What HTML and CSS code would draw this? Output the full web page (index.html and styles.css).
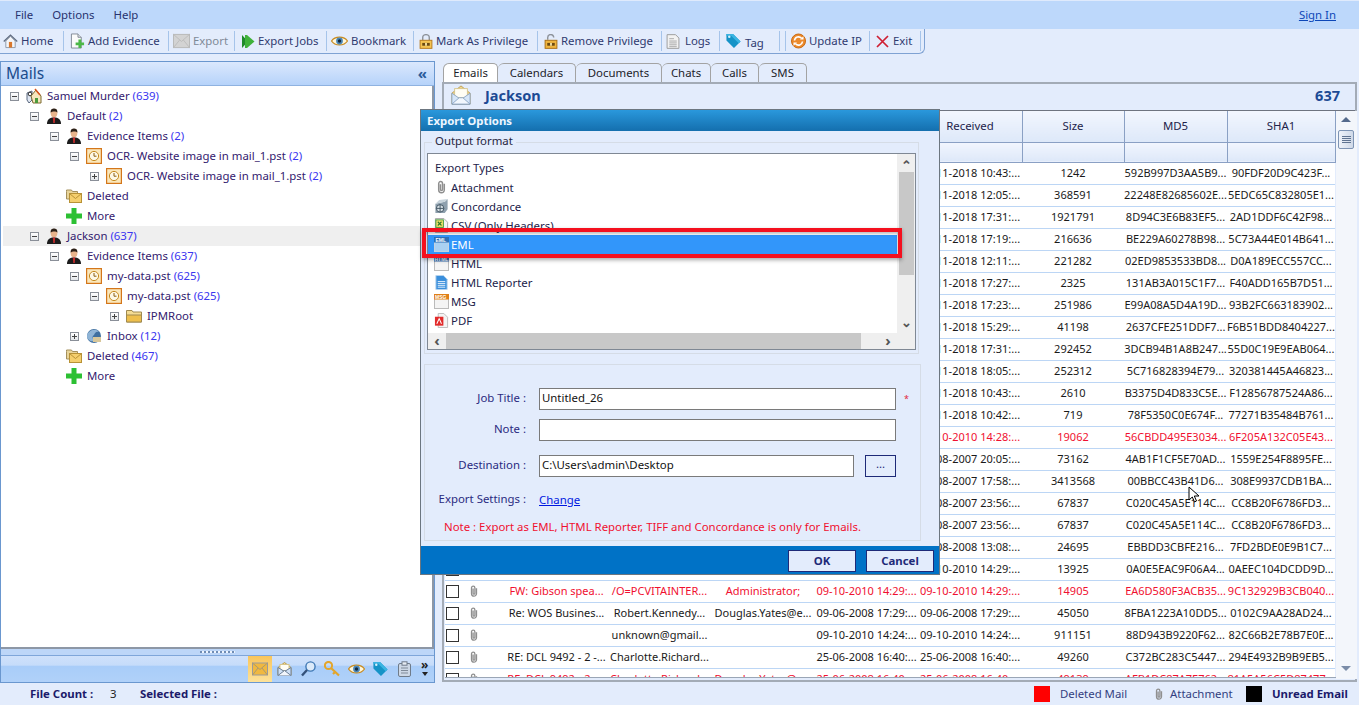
FILE: index.html
```html
<!DOCTYPE html>
<html lang="en">
<head>
<meta charset="utf-8">
<title>Export Options</title>
<link rel="stylesheet" href="styles.css">
</head>
<body>
<svg class="defs" aria-hidden="true">
  <symbol id="i-home" viewBox="0 0 16 16"><path d="M3 8v7h10V8L8 3z" fill="#f3f5f9" stroke="#8d97a8"/><path d="M.8 8.5 8 1.6l7.2 6.9" fill="none" stroke="#5e6a7e" stroke-width="1.3"/><rect x="6.3" y="9" width="3.4" height="6" fill="#d8772c"/></symbol>
  <symbol id="i-add" viewBox="0 0 16 16"><path d="M1.5.5h7l3.5 3.5v11.5H1.500z" fill="#fbfbfb" stroke="#7f8794"/><path d="M8.500.5V4H12" fill="#e4e6ea" stroke="#7f8794"/><path d="M9 6.500h3v3h3v3h-3v3H9v-3H6v-3h3z" fill="#4cb848"/></symbol>
  <symbol id="i-env-grey" viewBox="0 0 18 15"><rect x=".5" y=".5" width="17" height="14" fill="#d3d3d3" stroke="#b8b8b8"/><path d="M.5.500 9 8l8.500-7.500M.5 14.500 7 6.500M17.500 14.500 11 6.500" fill="none" stroke="#bcbcbc"/></symbol>
  <symbol id="i-jobs" viewBox="0 0 14 15"><path d="M1 1l6 6.500L1 14z" fill="#1f8a2a"/><path d="M4 1h2l7.500 6.500L6 14H4z" fill="#3fb23a"/></symbol>
  <symbol id="i-eye" viewBox="0 0 17 12"><path d="M.5 6C4 .8 13 .8 16.500 6 13 11.200 4 11.200.5 6z" fill="#fdf6dc" stroke="#c88a1e" stroke-width="1.200"/><circle cx="8.500" cy="6" r="3.400" fill="#4a86b8"/><circle cx="8.500" cy="6" r="1.700" fill="#14283c"/></symbol>
  <symbol id="i-lock" viewBox="0 0 14 16"><path d="M3.500 7V4a3.500 3.300 0 0 1 7 0v3" fill="none" stroke="#8e939b" stroke-width="1.500"/><rect x=".7" y="6.700" width="12.600" height="8.600" fill="#f5c452" stroke="#b7791c"/><rect x="3" y="9.500" width="8" height="3" fill="#6c4a12"/><rect x="6" y="9.500" width="2" height="3" fill="#f5e1a0"/></symbol>
  <symbol id="i-unlock" viewBox="0 0 14 16"><path d="M3.500 6V3.600a3.200 3 0 0 1 6.400 0" fill="none" stroke="#8e939b" stroke-width="1.500"/><rect x=".7" y="6.700" width="12.600" height="8.600" fill="#f0b63f" stroke="#a86e14"/><rect x="3" y="9.500" width="8" height="3" fill="#6c4a12"/><rect x="6" y="9.500" width="2" height="3" fill="#f5e1a0"/></symbol>
  <symbol id="i-logs" viewBox="0 0 14 16"><path d="M.7.700h9l3.600 3.600v11H.7z" fill="#f2f2f2" stroke="#9a9a9a"/><path d="M3 5h5M3 7.500h8M3 9.500h8M3 11.500h8M3 13.500h8" stroke="#a8a8a8"/></symbol>
  <symbol id="i-tag" viewBox="0 0 17 17"><path d="M1 1h7l8 8-7 7-8-8z" fill="#1593c7"/><path d="M1 1h7l8 8-2 2-8-8H1z" fill="#3ab4e2"/><circle cx="4" cy="4" r="1.300" fill="#d7f1fb"/></symbol>
  <symbol id="i-update" viewBox="0 0 15 15"><circle cx="7.500" cy="7.500" r="7" fill="#ec8a2c" stroke="#c96a12"/><path d="M3.500 7a4 4 0 0 1 7-2.200M11.500 8a4 4 0 0 1-7 2.200" fill="none" stroke="#fff" stroke-width="1.600"/><path d="M9 6h3.500V2.700zM6 9H2.500v3.300z" fill="#fff"/></symbol>
  <symbol id="i-exit" viewBox="0 0 13 13"><path d="M1 1l11 11M12 1 1 12" stroke="#cf1f33" stroke-width="1.700"/></symbol>
  <symbol id="i-person" viewBox="0 0 16 16"><path d="M1 16c0-5 3-6.500 7-6.500s7 1.500 7 6.500z" fill="#1c1c1c"/><ellipse cx="8" cy="5" rx="3.400" ry="4.200" fill="#e8b48c"/><path d="M4.600 4.500C4.500 1.500 6 .6 8 .6s3.500 1 3.400 3.900C10.500 3 6 3 4.600 4.500z" fill="#2a2018"/><path d="M6.800 9.500h2.400L8.700 15H7.300z" fill="#c72c2c"/></symbol>
  <symbol id="i-pst" viewBox="0 0 16 16"><rect x=".6" y=".6" width="14.800" height="14.800" fill="#fbe8bb" stroke="#d4761a" stroke-width="1.200"/><circle cx="8" cy="8" r="4.600" fill="#fdf8e6" stroke="#c58a20"/><path d="M8 5v3.200h2.500" fill="none" stroke="#8a5d10"/></symbol>
  <symbol id="i-del" viewBox="0 0 16 14"><path d="M.5 2.500V1h5l1 1.500h5V10H.5z" fill="#e8d49a" stroke="#a4905c"/><rect x="3.500" y="4.500" width="12" height="9" fill="#f5cf6c" stroke="#b89236"/><path d="M3.500 4.500 9.500 9.500l6-5" fill="none" stroke="#b89236"/></symbol>
  <symbol id="i-more" viewBox="0 0 16 16"><path d="M5.500 0h5v5.500H16v5h-5.500V16h-5v-5.500H0v-5h5.500z" fill="#2cc033"/></symbol>
  <symbol id="i-folder" viewBox="0 0 16 13"><path d="M.5 2.500V1h5.500l1 1.500h8.500V12.500H.5z" fill="#f4dc94" stroke="#a08a50"/><path d="M.5 5.500h15v7H.5z" fill="#eebf4c" stroke="#a08a50"/></symbol>
  <symbol id="i-root" viewBox="0 0 16 16"><path d="M1 5l5-2v9L3 15 1 12z" fill="#dfe6f2" stroke="#5d6b80"/><circle cx="4" cy="6" r="1.800" fill="#fff" stroke="#333"/><path d="M5 8l5-6 5 6v7H7z" fill="#f6e7bd" stroke="#7c6a30"/><path d="M9 1l5 6" stroke="#d8541c" stroke-width="1.500"/><rect x="9" y="10" width="3" height="5" fill="#4b9a3c"/></symbol>
  <symbol id="i-inbox" viewBox="0 0 16 16"><circle cx="8" cy="8" r="7" fill="#3f6f9f"/><path d="M3 4c3-3 8-3 10 0-3-1-4 1-5 3-2 1-2 4 1 6-4 1-8-1-8-5 0-2 1-3 2-4z" fill="#8fb4d6"/><path d="M7 9h8v5H7z" fill="#d8c79a"/></symbol>
  <symbol id="i-env-on" viewBox="0 0 16 13"><rect x=".5" y=".5" width="15" height="12" fill="#f0b840" stroke="#9a9a9a"/><path d="M.5.500 8 7l7.500-6.500M.5 12.500 6 5.500M15.500 12.500 10 5.500" fill="none" stroke="#a89a70"/></symbol>
  <symbol id="i-env-open" viewBox="0 0 15 15"><path d="M1 6 7.500 1 14 6v8H1z" fill="#f3d68a" stroke="#b89a50"/><rect x="3" y="3" width="9" height="6" fill="#fffdf4" stroke="#d5c48a"/><path d="M1 6l6.500 4L14 6v8H1z" fill="#cfe0f5" stroke="#6a7f99"/><path d="M1 14l6.500-5 6.500 5" fill="#f2f6fc" stroke="#6a7f99"/></symbol>
  <symbol id="i-mail" viewBox="0 0 22 22"><path d="M1 9 11 1l10 8v12H1z" fill="#f3d68a" stroke="#b89a50"/><rect x="4" y="4" width="14" height="10" fill="#fffdf4" stroke="#d5c48a"/><path d="M1 9l10 7 10-7v12H1z" fill="#d6e6f8" stroke="#8aa4c4"/><path d="M1 21l8-7h4l8 7z" fill="#f2f7fd" stroke="#8aa4c4"/></symbol>
  <symbol id="i-find" viewBox="0 0 15 16"><circle cx="9.500" cy="5.500" r="4.600" fill="#dceaf9" stroke="#3f78b4" stroke-width="1.400"/><path d="M6 9l-5 5.500" stroke="#33517a" stroke-width="2.400"/></symbol>
  <symbol id="i-key" viewBox="0 0 16 16"><circle cx="4.500" cy="4.500" r="3.600" fill="none" stroke="#e3a52a" stroke-width="2"/><path d="M7 7l8 7.500M11 11l-2 2" stroke="#e3a52a" stroke-width="2.200"/></symbol>
  <symbol id="i-clipboard" viewBox="0 0 14 16"><rect x="1" y="2.500" width="12" height="13" rx="1.500" fill="#cdd8e6" stroke="#6f7b8a"/><rect x="4.500" y=".8" width="5" height="3.400" fill="#e6ecf3" stroke="#6f7b8a"/><path d="M3.500 7h7M3.500 9.500h7M3.500 12h7" stroke="#808b99"/></symbol>
  <symbol id="i-clip" viewBox="0 0 8 12"><path d="M6.500 3.200v5.300a2.500 2.700 0 0 1-5 0V3a1.700 1.800 0 0 1 3.400 0v5.200a.9.900 0 0 1-1.800 0V3.500" fill="none" stroke="#8f8f8f" stroke-width="1.300"/></symbol>
  <symbol id="i-conc" viewBox="0 0 15 16"><path d="M1 5l10-2 3-3v11l-3 4H1z" fill="#8ea0ae"/><path d="M1 5l10-2 3-3-9 1z" fill="#c8d4dc"/><circle cx="6" cy="10" r="4" fill="#d7e0e6" stroke="#3f5260"/><path d="M6 6v8M2 10h8" stroke="#3f5260"/></symbol>
  <symbol id="i-csv" viewBox="0 0 14 16"><path d="M.5.500h9l4 4v11H.5z" fill="#f5f5f5" stroke="#aaa"/><rect x="1" y="2" width="8" height="8" fill="#f7e36a" stroke="#3f9a3a"/><path d="M3 4l4 4M7 4 3 8" stroke="#2d7a2a" stroke-width="1.200"/></symbol>
  <symbol id="i-report" viewBox="0 0 13 16"><path d="M.5.500h8l4 4v11H.5z" fill="#3a8fdc" stroke="#b8d4ee"/><path d="M2.500 7h8M2.500 9h8M2.500 11h8M2.500 13h8" stroke="#e8f3fd"/></symbol>
  <symbol id="i-pdf" viewBox="0 0 14 16"><path d="M3.500.500h6l4 4v11h-10z" fill="#f4f4f4" stroke="#bbb"/><rect x="0" y="4" width="9" height="9.500" fill="#e22b2b"/><path d="M2 11.500 4.500 6 7 11.500" fill="none" stroke="#fff" stroke-width="1.100"/></symbol>
</svg>

<header class="menubar">
  <nav class="menus"><span>File</span><span>Options</span><span>Help</span></nav>
  <a class="signin" href="#">Sign In</a>
</header>

<div class="toolbar">
  <div class="tool t-home"><svg class="ic i15"><use href="#i-home"/></svg><span>Home</span></div>
  <div class="tool t-add"><svg class="ic i15"><use href="#i-add"/></svg><span>Add Evidence</span></div>
  <div class="tool t-exp off"><svg class="ic i17"><use href="#i-env-grey"/></svg><span>Export</span></div>
  <div class="tool t-jobs"><svg class="ic i14"><use href="#i-jobs"/></svg><span>Export Jobs</span></div>
  <div class="tool t-book"><svg class="ic i17"><use href="#i-eye"/></svg><span>Bookmark</span></div>
  <div class="tool t-mark"><svg class="ic i14"><use href="#i-lock"/></svg><span>Mark As Privilege</span></div>
  <div class="tool t-rem"><svg class="ic i14"><use href="#i-unlock"/></svg><span>Remove Privilege</span></div>
  <div class="tool t-logs"><svg class="ic i14"><use href="#i-logs"/></svg><span>Logs</span></div>
  <div class="tool t-tag"><svg class="ic i17"><use href="#i-tag"/></svg><span class="tagt">Tag</span></div>
  <div class="tool t-upd"><svg class="ic i15"><use href="#i-update"/></svg><span>Update IP</span></div>
  <div class="tool t-exit"><svg class="ic i13"><use href="#i-exit"/></svg><span>Exit</span></div>
</div>

<main class="main">
  <aside class="left">
    <div class="left-head"><span class="left-title">Mails</span><span class="collapse">«</span></div>
    <div class="tree">
      <div class="node d0"><i class="box minus"></i><svg class="ic nic"><use href="#i-root"/></svg><span>Samuel Murder <b>(639)</b></span></div>
      <div class="node d1"><i class="box minus"></i><svg class="ic nic"><use href="#i-person"/></svg><span>Default <b>(2)</b></span></div>
      <div class="node d2"><i class="box minus"></i><svg class="ic nic"><use href="#i-person"/></svg><span>Evidence Items <b>(2)</b></span></div>
      <div class="node d3"><i class="box minus"></i><svg class="ic nic"><use href="#i-pst"/></svg><span>OCR- Website image in mail_1.pst <b>(2)</b></span></div>
      <div class="node d4"><i class="box plus"></i><svg class="ic nic"><use href="#i-pst"/></svg><span>OCR- Website image in mail_1.pst <b>(2)</b></span></div>
      <div class="node d2"><i class="box none"></i><svg class="ic nic"><use href="#i-del"/></svg><span>Deleted</span></div>
      <div class="node d2"><i class="box none"></i><svg class="ic nic"><use href="#i-more"/></svg><span>More</span></div>
      <div class="node d1 sel"><i class="box minus"></i><svg class="ic nic"><use href="#i-person"/></svg><span>Jackson <b>(637)</b></span></div>
      <div class="node d2"><i class="box minus"></i><svg class="ic nic"><use href="#i-person"/></svg><span>Evidence Items <b>(637)</b></span></div>
      <div class="node d3"><i class="box minus"></i><svg class="ic nic"><use href="#i-pst"/></svg><span>my-data.pst <b>(625)</b></span></div>
      <div class="node d4"><i class="box minus"></i><svg class="ic nic"><use href="#i-pst"/></svg><span>my-data.pst <b>(625)</b></span></div>
      <div class="node d5"><i class="box plus"></i><svg class="ic nic"><use href="#i-folder"/></svg><span>IPMRoot</span></div>
      <div class="node d3"><i class="box plus"></i><svg class="ic nic"><use href="#i-inbox"/></svg><span>Inbox <b>(12)</b></span></div>
      <div class="node d2"><i class="box none"></i><svg class="ic nic"><use href="#i-del"/></svg><span>Deleted <b>(467)</b></span></div>
      <div class="node d2"><i class="box none"></i><svg class="ic nic"><use href="#i-more"/></svg><span>More</span></div>
    </div>
    <div class="splitter"><span class="grip"></span></div>
    <div class="left-foot">
      <span class="fbtn on"><svg class="ic i16"><use href="#i-env-on"/></svg></span>
      <span class="fbtn"><svg class="ic i15"><use href="#i-env-open"/></svg></span>
      <span class="fbtn"><svg class="ic i15"><use href="#i-find"/></svg></span>
      <span class="fbtn"><svg class="ic i16"><use href="#i-key"/></svg></span>
      <span class="fbtn"><svg class="ic i17"><use href="#i-eye"/></svg></span>
      <span class="fbtn"><svg class="ic i17"><use href="#i-tag"/></svg></span>
      <span class="fbtn"><svg class="ic i15"><use href="#i-clipboard"/></svg></span>
      <span class="more-btn">»<i></i></span>
    </div>
  </aside>

  <section class="right">
    <div class="tabs">
      <span class="tab active t1">Emails</span><span class="tab t2">Calendars</span><span class="tab t3">Documents</span><span class="tab t4">Chats</span><span class="tab t5">Calls</span><span class="tab t6">SMS</span>
    </div>
    <div class="panel">
      <div class="panel-head">
        <svg class="ic i20"><use href="#i-mail"/></svg>
        <span class="who">Jackson</span>
        <span class="total">637</span>
      </div>
      <div class="grid-wrap">
        <div class="grid-clip">
          <table class="grid">
            <colgroup><col class="c1"><col class="c2"><col class="c3"><col class="c3"><col class="c4"><col class="c3"><col class="c4"><col class="c5"><col class="c3"><col class="c6"></colgroup>
            <thead>
              <tr class="h1"><th></th><th></th><th>Subject</th><th>From</th><th>To</th><th>Sent</th><th>Received</th><th>Size</th><th>MD5</th><th>SHA1</th></tr>
              <tr class="h2"><th></th><th></th><th></th><th></th><th></th><th></th><th></th><th></th><th></th><th></th></tr>
            </thead>
            <tbody>
              <tr><td><i class="chk"></i></td><td></td><td></td><td></td><td></td><td></td><td>09-11-2018 10:43:...</td><td>1242</td><td>592B997D3AA5B9...</td><td>90FDF20D9C423F...</td></tr>
              <tr><td><i class="chk"></i></td><td></td><td></td><td></td><td></td><td></td><td>09-11-2018 12:05:...</td><td>368591</td><td>22248E82685602E...</td><td>5EDC65C832805E1...</td></tr>
              <tr><td><i class="chk"></i></td><td></td><td></td><td></td><td></td><td></td><td>09-11-2018 17:31:...</td><td>1921791</td><td>8D94C3E6B83EF5...</td><td>2AD1DDF6C42F98...</td></tr>
              <tr><td><i class="chk"></i></td><td></td><td></td><td></td><td></td><td></td><td>09-11-2018 17:19:...</td><td>216636</td><td>BE229A60278B98...</td><td>5C73A44E014B641...</td></tr>
              <tr><td><i class="chk"></i></td><td></td><td></td><td></td><td></td><td></td><td>09-11-2018 12:11:...</td><td>221282</td><td>02ED9853533BD8...</td><td>D0A189ECC557CC...</td></tr>
              <tr><td><i class="chk"></i></td><td></td><td></td><td></td><td></td><td></td><td>09-11-2018 17:27:...</td><td>2325</td><td>131AB3A015C1F7...</td><td>F40ADD165B7D51...</td></tr>
              <tr><td><i class="chk"></i></td><td></td><td></td><td></td><td></td><td></td><td>09-11-2018 17:23:...</td><td>251986</td><td>E99A08A5D4A19D...</td><td>93B2FC663183902...</td></tr>
              <tr><td><i class="chk"></i></td><td></td><td></td><td></td><td></td><td></td><td>09-11-2018 15:29:...</td><td>41198</td><td>2637CFE251DDF7...</td><td>F6B51BDD8404227...</td></tr>
              <tr><td><i class="chk"></i></td><td></td><td></td><td></td><td></td><td></td><td>09-11-2018 17:31:...</td><td>292452</td><td>3DCB94B1A8B247...</td><td>55D0C19E9EAB064...</td></tr>
              <tr><td><i class="chk"></i></td><td></td><td></td><td></td><td></td><td></td><td>09-11-2018 18:05:...</td><td>252312</td><td>5C716828394E79...</td><td>320381445A46823...</td></tr>
              <tr><td><i class="chk"></i></td><td></td><td></td><td></td><td></td><td></td><td>09-11-2018 10:43:...</td><td>2610</td><td>B3375D4D833C5E...</td><td>F12856787524A86...</td></tr>
              <tr><td><i class="chk"></i></td><td></td><td></td><td></td><td></td><td></td><td>09-11-2018 10:42:...</td><td>719</td><td>78F5350C0E674F...</td><td>77271B35484B761...</td></tr>
              <tr class="red"><td><i class="chk"></i></td><td></td><td></td><td></td><td></td><td></td><td>09-10-2010 14:28:...</td><td>19062</td><td>56CBDD495E3034...</td><td>6F205A132C05E43...</td></tr>
              <tr><td><i class="chk"></i></td><td></td><td></td><td></td><td></td><td></td><td>21-08-2007 20:05:...</td><td>73162</td><td>4AB1F1CF5E70AD...</td><td>1559E254F8895FE...</td></tr>
              <tr><td><i class="chk"></i></td><td></td><td></td><td></td><td></td><td></td><td>21-08-2007 17:58:...</td><td>3413568</td><td>00BBCC43B41D6...</td><td>308E9937CDB1BA...</td></tr>
              <tr><td><i class="chk"></i></td><td></td><td></td><td></td><td></td><td></td><td>21-08-2007 23:56:...</td><td>67837</td><td>C020C45A5E114C...</td><td>CC8B20F6786FD3...</td></tr>
              <tr><td><i class="chk"></i></td><td></td><td></td><td></td><td></td><td></td><td>21-08-2007 23:56:...</td><td>67837</td><td>C020C45A5E114C...</td><td>CC8B20F6786FD3...</td></tr>
              <tr><td><i class="chk"></i></td><td></td><td></td><td></td><td></td><td></td><td>21-08-2008 13:08:...</td><td>24695</td><td>EBBDD3CBFE216...</td><td>7FD2BDE0E9B1C7...</td></tr>
              <tr><td><i class="chk"></i></td><td></td><td></td><td></td><td></td><td></td><td>09-10-2010 14:29:...</td><td>13925</td><td>0A0E5EAC9F06A4...</td><td>0AEEC104DCDD9D...</td></tr>
              <tr class="red"><td><i class="chk"></i></td><td><svg class="ic clip"><use href="#i-clip"/></svg></td><td>FW: Gibson spea...</td><td>/O=PCVITAINTER...</td><td>Administrator;</td><td>09-10-2010 14:29:...</td><td>09-10-2010 14:29:...</td><td>14905</td><td>EA6D580F3ACB35...</td><td>9C132929B3CB040...</td></tr>
              <tr><td><i class="chk"></i></td><td><svg class="ic clip"><use href="#i-clip"/></svg></td><td>Re: WOS Busines...</td><td>Robert.Kennedy...</td><td>Douglas.Yates@e...</td><td>09-06-2008 17:29:...</td><td>09-06-2008 17:29:...</td><td>45050</td><td>8FBA1223A10DD5...</td><td>0102C9AA28AD24...</td></tr>
              <tr><td><i class="chk"></i></td><td><svg class="ic clip"><use href="#i-clip"/></svg></td><td></td><td>unknown@gmail...</td><td></td><td>09-10-2010 14:24:...</td><td>09-10-2010 14:24:...</td><td>911151</td><td>88D943B9220F62...</td><td>82C66B2E78B7E0E...</td></tr>
              <tr><td><i class="chk"></i></td><td><svg class="ic clip"><use href="#i-clip"/></svg></td><td>RE: DCL 9492 - 2 -...</td><td>Charlotte.Richard...</td><td></td><td>25-06-2008 16:40:...</td><td>25-06-2008 16:40:...</td><td>49260</td><td>C372BC283C5447...</td><td>294E4932B9B9EB5...</td></tr>
              <tr class="red"><td><i class="chk"></i></td><td><svg class="ic clip"><use href="#i-clip"/></svg></td><td>RE: DCL 9492 - 2 -...</td><td>Charlotte.Richard...</td><td>Douglas.Yates@e...</td><td>25-06-2008 16:40:...</td><td>25-06-2008 16:40:...</td><td>49139</td><td>AFB1DC87A7E762...</td><td>81A5A56C5D87477...</td></tr>
            </tbody>
          </table>
        </div>
        <div class="vscroll"><span class="up"></span><span class="thumb"></span><span class="down"></span></div>
      </div>
    </div>
  </section>
</main>

<footer class="status">
  <div class="st-left"><b class="fc">File Count :</b><span class="fn">3</span><b class="sf">Selected File :</b></div>
  <div class="st-right">
    <i class="sw red-sw"></i><span class="s-del">Deleted Mail</span>
    <svg class="ic s-clip"><use href="#i-clip"/></svg><span class="s-att">Attachment</span>
    <i class="sw black-sw"></i><b class="s-unread">Unread Email</b>
  </div>
</footer>

<div class="modal">
  <div class="modal-title">Export Options</div>
  <fieldset class="group">
    <legend>Output format</legend>
    <div class="listbox">
      <div class="list-rows">
        <div class="li head">Export Types</div>
        <div class="li"><svg class="ic lic small"><use href="#i-clip"/></svg>Attachment</div>
        <div class="li"><svg class="ic lic"><use href="#i-conc"/></svg>Concordance</div>
        <div class="li"><svg class="ic lic"><use href="#i-csv"/></svg>CSV (Only Headers)</div>
        <div class="li chosen"><svg class="ic lic" viewBox="0 0 15 15"><rect x=".5" y=".5" width="14" height="14" fill="#a9d0f2" stroke="#c5d2df"/><rect width="15" height="5.500" fill="#2d6fb5"/><text x="1.500" y="4.800" class="mini">EML</text></svg>EML</div>
        <div class="li"><svg class="ic lic" viewBox="0 0 15 15"><rect x=".5" y=".5" width="14" height="14" fill="#f4f4f4" stroke="#bbb"/><rect width="15" height="5.500" fill="#3970b6"/><text x=".5" y="4.800" class="mini">HTML</text></svg>HTML</div>
        <div class="li"><svg class="ic lic"><use href="#i-report"/></svg>HTML Reporter</div>
        <div class="li"><svg class="ic lic" viewBox="0 0 15 15"><rect x=".5" y=".5" width="14" height="14" fill="#f4f4f4" stroke="#bbb"/><rect width="15" height="5.500" fill="#e08018"/><text x="1" y="4.800" class="mini">MSG</text></svg>MSG</div>
        <div class="li"><svg class="ic lic"><use href="#i-pdf"/></svg>PDF</div>
      </div>
      <div class="list-v"><span class="ar">⌃</span><span class="lthumb"></span><span class="ar dn">⌄</span></div>
      <div class="list-h"><span class="ar-h">‹</span><span class="hthumb"></span><span class="ar-h">›</span></div>
    </div>
  </fieldset>
  <div class="form">
    <div class="frow r1"><label>Job Title :</label><span class="input w357">Untitled_26</span><span class="star">*</span></div>
    <div class="frow r2"><label>Note :</label><span class="input w357"></span></div>
    <div class="frow r3"><label>Destination :</label><span class="input w315">C:\Users\admin\Desktop</span><span class="browse">...</span></div>
    <div class="frow r4"><label>Export Settings :</label><a class="change" href="#">Change</a></div>
    <p class="warn">Note : Export as EML, HTML Reporter, TIFF and Concordance is only for Emails.</p>
  </div>
  <div class="modal-foot"><button class="btn">OK</button><button class="btn">Cancel</button></div>
</div>
<div class="redbox"></div>
<svg class="cursor" viewBox="0 0 12 18"><path d="M1 1v13l3.300-3 2.200 5 2-1-2.200-5H11z" fill="#fff" stroke="#000"/></svg>
</body>
</html>
```
FILE: styles.css
```css
* { box-sizing: border-box; }
html, body { margin: 0; height: 705px; overflow: hidden; }
body { width: 1359px; background: #e3ecfc; font: 11.4px/16px "Noto Sans", "Open Sans", sans-serif; color: #2a2370; position: relative; }
.defs { position: absolute; width: 0; height: 0; }
.mini { font: bold 5px "Liberation Sans", sans-serif; fill: #fff; }
.ic { display: block; flex: none; }
.i13 { width: 13px; height: 13px; }
.i14 { width: 14px; height: 15px; }
.i15 { width: 15px; height: 16px; }
.i16 { width: 16px; height: 16px; }
.i17 { width: 17px; height: 16px; }
.i20 { width: 20px; height: 20px; }

.menubar { height: 29px; background: #bdd8fb; border-top: 1px solid #dfeafc; display: flex; justify-content: space-between; align-items: center; padding: 0 23px 0 15px; }
.menus { display: flex; gap: 19px; color: #27336f; }
.signin { color: #0d47b8; }

.toolbar { width: 925px; height: 25px; display: flex; align-items: center; border-bottom: 1px solid #7fa2d3; border-right: 1px solid #7fa2d3; border-bottom-right-radius: 6px; padding-left: 3px; }
.tool { display: flex; align-items: center; gap: 3px; height: 20px; color: #2f3a6f; white-space: nowrap; border-right: 1px solid #a6c4ea; }
.tool.off span { color: #7f8a97; }
.tagt { margin-top: 3px; }
.t-home { width: 61px; }
.t-add { width: 105px; padding-left: 6px; }
.t-exp { width: 66px; padding-left: 4px; }
.t-jobs { width: 92px; padding-left: 6px; }
.t-book { width: 87px; padding-left: 4px; }
.t-mark { width: 124px; padding-left: 5px; }
.t-rem { width: 124px; padding-left: 6px; }
.t-logs { width: 58px; padding-left: 4px; gap: 5px; }
.t-tag { width: 66px; padding-left: 5px; box-shadow: inset -5px 0 0 #e3ecfc, inset -6px 0 0 #a6c4ea; }
.t-upd { width: 84px; padding-left: 5px; }
.t-exit { width: 51px; padding-left: 6px; gap: 4px; }

.main { height: 629px; display: flex; }
.left { width: 435px; margin-top: 7px; height: 622px; border: 1px solid #6a97cf; display: flex; flex-direction: column; }
.left-head { height: 24px; flex: none; background: linear-gradient(#dbe8fd, #b6d3fa); display: flex; align-items: center; justify-content: space-between; padding: 0 7px 2px 5px; border-bottom: 1px solid #8fb2e0; }
.left-title { font-size: 15.500px; color: #1c4c8c; }
.collapse { font-size: 15px; font-weight: 700; color: #2a5a9a; }
.tree { flex: none; height: 563px; background: #fff; border-right: 2px solid #8d97a6; border-bottom: 2px solid #8d97a6; padding-left: 2px; }
.node { height: 20px; display: flex; align-items: center; white-space: nowrap; color: #33206e; }
.node b { font-weight: 400; color: #3a36f0; }
.node .box { width: 9px; height: 9px; flex: none; border: 1px solid #8a8f98; background: linear-gradient(#fff, #e3e6ea); margin-right: 7px; position: relative; }
.box.none { visibility: hidden; }
.box::before { content: ""; position: absolute; left: 1px; top: 3px; width: 5px; height: 1px; background: #444; }
.box.plus::after { content: ""; position: absolute; left: 3px; top: 1px; width: 1px; height: 5px; background: #444; }
.nic { width: 16px; height: 16px; margin-right: 5px; }
.d0 { padding-left: 7px; }
.d1 { padding-left: 27px; }
.d2 { padding-left: 47px; }
.d3 { padding-left: 67px; }
.d4 { padding-left: 87px; }
.d5 { padding-left: 107px; }
.sel { background: #efefef; }
.splitter { height: 7px; flex: none; background: #bdd6f8; border-bottom: 1px solid #7fa6da; display: flex; justify-content: center; align-items: center; }
.grip { width: 35px; height: 2px; background: repeating-linear-gradient(90deg, #6f8cb4 0 2px, #eef4fd 2px 4px); }
.left-foot { flex: 1; min-height: 0; background: linear-gradient(#cfe1fb 0, #c6dcfa 35%, #a9cdf9 40%, #b0d1f9 100%); display: flex; justify-content: flex-end; align-items: stretch; }
.fbtn { width: 24px; display: flex; align-items: center; justify-content: center; }
.fbtn.on { background: linear-gradient(#f9c55a, #fde29a); }
.more-btn { width: 18px; font-size: 12px; line-height: 11px; font-weight: 700; color: #222; padding: 3px 0 0 5px; }
.more-btn i { display: block; width: 0; border: 3px solid transparent; border-top: 4px solid #222; margin: 2px 0 0 1px; }

.right { flex: 1; margin-left: 7px; display: flex; flex-direction: column; height: 629px; }
.tabs { height: 28px; padding: 9px 0 0 1px; display: flex; flex: none; }
.tab { height: 19px; border: 1px solid #a3a3a3; border-bottom: 0; border-left: 0; border-radius: 6px 5px 0 0; text-align: center; color: #1d1d2a; line-height: 17px; background: #e3ecfc; }
.tab.active { background: #fff; border-left: 1px solid #a3a3a3; }
.t1 { width: 55px; }
.t2 { width: 78px; }
.t3 { width: 86px; }
.t4 { width: 49px; }
.t5 { width: 48px; }
.t6 { width: 48px; }
.panel { width: 915px; height: 600px; border: 2px solid #a3abb6; display: flex; flex-direction: column; }
.panel-head { height: 27px; flex: none; display: flex; align-items: center; padding: 0 15px 4px 7px; border-bottom: 1px solid #6e7480; }
.panel-head .i20 { margin-right: 14px; }
.who { flex: 1; font-size: 14.500px; font-weight: 700; color: #1c4a94; }
.total { font-size: 14.500px; font-weight: 700; color: #1c4a94; }
.grid-wrap { flex: 1; min-height: 0; display: flex; padding-left: 1px; }
.grid-clip { width: 891px; overflow: hidden; flex: none; border-bottom: 1px solid #9aa6b6; height: 567px; }
.grid { width: 890px; table-layout: fixed; border-collapse: collapse; }
.c1 { width: 23px; }
.c2 { width: 37px; }
.c3 { width: 103px; }
.c4 { width: 104px; }
.c5 { width: 102px; }
.c6 { width: 108px; }
.grid th { padding: 0; font-weight: 400; color: #23234a; background: linear-gradient(#f2f6fe, #dde8f9); border-right: 1px solid #8aa0c4; border-bottom: 1px solid #8aa0c4; }
.h1 { height: 31px; }
.h2 { height: 20px; }
.grid td { height: 22px; padding: 0; font-size: 11px; text-align: center; white-space: nowrap; overflow: hidden; color: #1a1a1a; border-bottom: 1px solid #bcd6f5; background: #fff; }
.grid .red td { color: #f01030; }
.chk { display: block; width: 13px; height: 13px; margin-left: 1px; border: 1px solid #333; background: #fff; }
.clip { width: 8px; height: 12px; margin: 0 0 0 2px; }
.vscroll { width: 21px; flex: none; background: #f3f6fb; position: relative; height: 568px; }
.up { position: absolute; left: 5px; top: 6px; border: 5px solid transparent; border-top: 0; border-bottom: 5px solid #546a8c; }
.thumb { position: absolute; left: 2px; top: 19px; width: 16px; height: 19px; border: 1px solid #7e94b4; border-radius: 2px; background: repeating-linear-gradient(#5f7390 0 1px, transparent 1px 2px) center / 9px 7px no-repeat, linear-gradient(90deg, #eef2f9, #cfd9e8); }
.down { position: absolute; left: 5px; bottom: 8px; border: 5px solid transparent; border-bottom: 0; border-top: 5px solid #7a8ca8; }

.status { height: 22px; display: flex; justify-content: space-between; align-items: center; padding: 0 14px 0 30px; }
.st-left { display: flex; }
.status b { font-weight: 700; color: #1b1a6a; }
.fc { width: 80px; }
.fn { width: 30px; color: #222; }
.st-right { display: flex; align-items: center; }
.sw { width: 16px; height: 16px; }
.red-sw { background: #f00; margin-right: 10px; }
.black-sw { background: #000; margin-right: 10px; }
.s-del { width: 95px; color: #333f80; }
.s-clip { width: 8px; height: 12px; margin-right: 7px; }
.s-att { width: 76px; color: #333f80; }
.s-unread { width: 73px; white-space: nowrap; }

.modal { position: absolute; left: 420px; top: 109px; width: 520px; height: 466px; background: #e3ecfc; border: 1px solid #6c7680; display: flex; flex-direction: column; }
.modal-title { height: 21px; flex: none; background: linear-gradient(#2a98dc, #146fae); color: #eef6ff; font-weight: 700; padding-left: 6px; line-height: 21px; }
.group { margin: 3px 20px 0 3px; padding: 3px 2px 3px; border: 1px solid #d5dce6; min-width: 0; }
.group legend { padding: 0 3px; margin-left: 5px; color: #27273f; line-height: 14px; height: 16px; }
.listbox { height: 197px; border: 1px solid #7f8894; background: #fff; display: grid; grid-template-columns: 1fr 18px; grid-template-rows: 1fr 16px; overflow: hidden; }
.list-rows { padding-top: 2px; min-height: 0; overflow: hidden; }
.li { height: 19px; padding-left: 23px; line-height: 19px; color: #22224a; display: flex; align-items: center; position: relative; overflow: hidden; }
.li.head { padding-left: 7px; height: 22px; }
.li.chosen { background: #3296fa; color: #fff; }
.lic { position: absolute; left: 6px; top: 2px; width: 15px; height: 15px; }
.lic.small { left: 9px; width: 9px; height: 14px; }
.list-v { grid-row: 1 / 3; grid-column: 2; background: #efefef; display: flex; flex-direction: column; align-items: center; position: relative; }
.ar { height: 18px; font-size: 13px; line-height: 22px; color: #555; font-weight: 700; }
.ar.dn { position: absolute; bottom: 16px; line-height: 12px; height: 17px; }
.lthumb { width: 15px; height: 103px; background: #c8c8c8; }
.list-h { grid-row: 2; grid-column: 1; background: #efefef; display: flex; align-items: stretch; }
.ar-h { width: 18px; text-align: center; font-weight: 700; line-height: 14px; font-size: 15px; color: #555; }
.hthumb { width: 415px; background: #c8c8c8; margin-right: auto; }
.form { margin: 10px 18px 0 3px; height: 177px; border: 1px solid #d5dce6; padding-top: 23px; }
.frow { display: flex; align-items: center; height: 22px; margin-bottom: 9px; }
.r2 { margin-bottom: 14px; }
.r3 { margin-bottom: 13px; }
.r4 { height: 20px; margin-bottom: 7px; }
.frow label { width: 101px; margin-right: 13px; padding-bottom: 2px; text-align: right; color: #2a2a80; white-space: nowrap; }
.input { height: 22px; border: 1px solid #7a7a7a; background: #fff; padding-left: 2px; line-height: 17px; color: #111; }
.w357 { width: 357px; }
.w315 { width: 315px; }
.star { color: #e2263e; margin-left: 8px; font-size: 9px; }
.browse { width: 31px; height: 22px; margin-left: 11px; border: 1px solid #1e2a78; text-align: center; color: #1e2a78; }
.change { color: #0018e0; }
.warn { margin: 0 0 0 19px; color: #f01030; white-space: nowrap; line-height: 20px; }
.modal-foot { height: 28px; margin-top: auto; flex: none; background: #0072c6; display: flex; justify-content: flex-end; gap: 10px; padding: 4px 5px 2px 0; }
.btn { width: 68px; height: 22px; padding: 0; font: 700 11.400px/18px "Noto Sans", sans-serif; color: #1e2a78; background: #e3ecfc; border: 1px solid #1e2a78; }
.redbox { position: absolute; left: 422px; top: 228px; width: 480px; height: 30px; border: 4px solid #f4101e; box-shadow: 0 2px 4px rgba(0,0,0,.35), inset 0 2px 3px rgba(0,0,0,.25); }
.cursor { position: absolute; left: 1188px; top: 486px; width: 12px; height: 18px; }
```
